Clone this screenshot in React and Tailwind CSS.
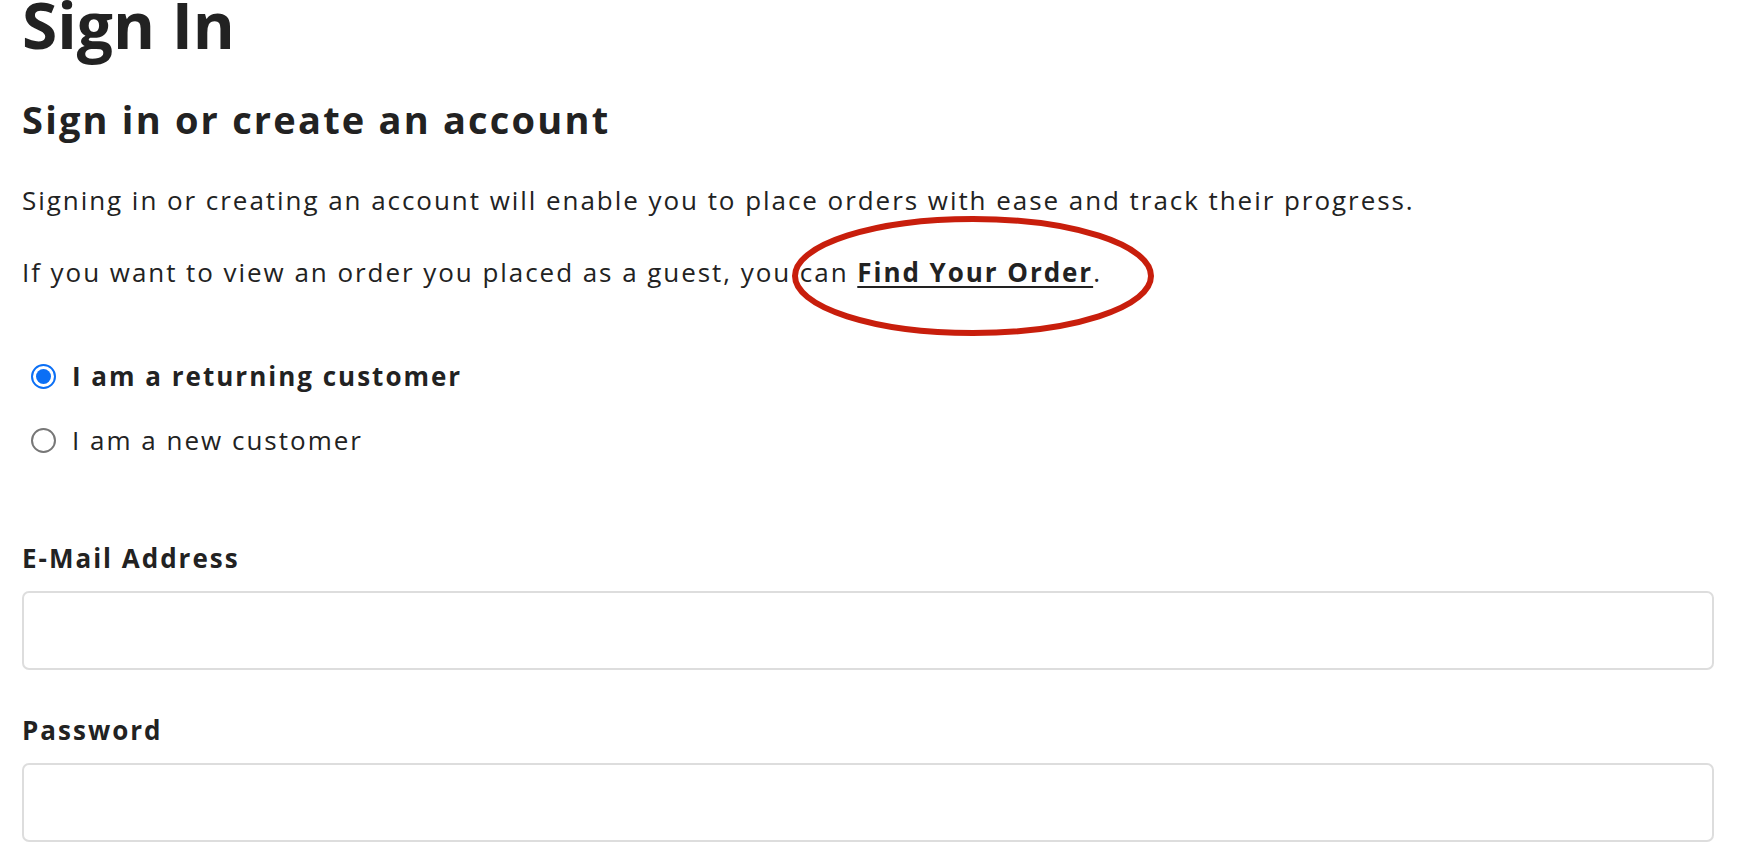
function Radio({ checked, label }) {
  return (
    <label className="flex items-center gap-[16px]">
      {checked ? (
        <span className="flex h-[25px] w-[25px] items-center justify-center rounded-full border-[2px] border-[#0b6ff5] bg-white">
          <span className="h-[15px] w-[15px] rounded-full bg-[#0b6ff5]" />
        </span>
      ) : (
        <span className="h-[25px] w-[25px] rounded-full border-[2px] border-[#777777] bg-white" />
      )}
      <span className={checked ? 'font-bold' : 'font-normal'}>{label}</span>
    </label>
  );
}

function Field({ label, type }) {
  return (
    <div>
      <p className="text-[26px] font-bold leading-[34px] tracking-[2px]">{label}</p>
      <input
        type={type}
        className="mt-[16px] block h-[79px] w-full rounded-[7px] border-[2px] border-[#dddddd] bg-white px-4 outline-none"
      />
    </div>
  );
}

export default function App() {
  return (
    <div className="min-h-screen bg-white text-[#222222] font-['Open_Sans',sans-serif]">
      <div className="relative pl-[22px] pr-[26px]">
        <h1 className="-mt-[7px] text-[64px] font-bold leading-[64px]">Sign In</h1>
        <h2 className="mt-[40px] text-[38px] font-bold leading-[44px] tracking-[2.2px]">Sign in or create an account</h2>

        <p className="mt-[42px] text-[26px] leading-[34px] tracking-[1.95px]">
          Signing in or creating an account will enable you to place orders with ease and track their progress.
        </p>
        <p className="mt-[38px] text-[26px] leading-[34px] tracking-[1.95px]">
          If you want to view an order you placed as a guest, you can{' '}
          <a href="#" className="font-bold underline underline-offset-[4px] decoration-[2px]">Find Your Order</a>.
        </p>

        <div className="mt-[70px] space-y-[30px] pl-[9px] text-[26px] leading-[34px] tracking-[2px]">
          <Radio checked label="I am a returning customer" />
          <Radio label="I am a new customer" />
        </div>

        <div className="mt-[84px] space-y-[43px]">
          <Field label="E-Mail Address" type="email" />
          <Field label="Password" type="password" />
        </div>

        <svg
          className="pointer-events-none absolute left-[790px] top-[221px]"
          width="366"
          height="124"
          viewBox="0 0 366 124"
        >
          <ellipse cx="183" cy="62" rx="178" ry="57" fill="none" stroke="#c81e0c" strokeWidth="6" />
        </svg>
      </div>
    </div>
  );
}
